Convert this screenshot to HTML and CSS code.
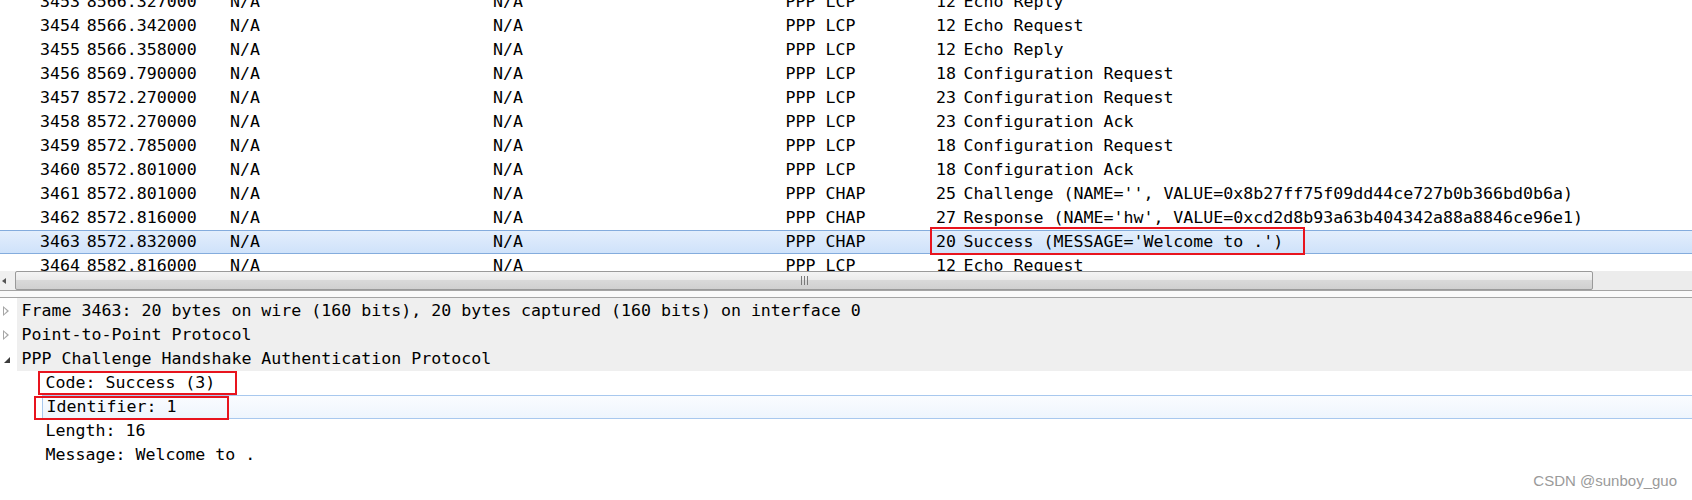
FILE: index.html
```html
<!DOCTYPE html>
<html>
<head>
<meta charset="utf-8">
<link rel="stylesheet" href="styles.css">
</head>
<body>
<div class="app">
  <div class="plist">
    <div class="rows">
      <div class="row"><span class="no">3453</span><span class="tm">8566.327000</span><span>N/A</span><span>N/A</span><span>PPP LCP</span><span class="len">12</span><span class="info">Echo Reply</span></div>
      <div class="row"><span class="no">3454</span><span class="tm">8566.342000</span><span>N/A</span><span>N/A</span><span>PPP LCP</span><span class="len">12</span><span class="info">Echo Request</span></div>
      <div class="row"><span class="no">3455</span><span class="tm">8566.358000</span><span>N/A</span><span>N/A</span><span>PPP LCP</span><span class="len">12</span><span class="info">Echo Reply</span></div>
      <div class="row"><span class="no">3456</span><span class="tm">8569.790000</span><span>N/A</span><span>N/A</span><span>PPP LCP</span><span class="len">18</span><span class="info">Configuration Request</span></div>
      <div class="row"><span class="no">3457</span><span class="tm">8572.270000</span><span>N/A</span><span>N/A</span><span>PPP LCP</span><span class="len">23</span><span class="info">Configuration Request</span></div>
      <div class="row"><span class="no">3458</span><span class="tm">8572.270000</span><span>N/A</span><span>N/A</span><span>PPP LCP</span><span class="len">23</span><span class="info">Configuration Ack</span></div>
      <div class="row"><span class="no">3459</span><span class="tm">8572.785000</span><span>N/A</span><span>N/A</span><span>PPP LCP</span><span class="len">18</span><span class="info">Configuration Request</span></div>
      <div class="row"><span class="no">3460</span><span class="tm">8572.801000</span><span>N/A</span><span>N/A</span><span>PPP LCP</span><span class="len">18</span><span class="info">Configuration Ack</span></div>
      <div class="row"><span class="no">3461</span><span class="tm">8572.801000</span><span>N/A</span><span>N/A</span><span>PPP CHAP</span><span class="len">25</span><span class="info">Challenge (NAME='', VALUE=0x8b27ff75f09dd44ce727b0b366bd0b6a)</span></div>
      <div class="row"><span class="no">3462</span><span class="tm">8572.816000</span><span>N/A</span><span>N/A</span><span>PPP CHAP</span><span class="len">27</span><span class="info">Response (NAME='hw', VALUE=0xcd2d8b93a63b404342a88a8846ce96e1)</span></div>
      <div class="row selected"><span class="no">3463</span><span class="tm">8572.832000</span><span>N/A</span><span>N/A</span><span>PPP CHAP</span><span class="len">20</span><span class="info">Success (MESSAGE='Welcome to .')</span></div>
      <div class="row"><span class="no">3464</span><span class="tm">8582.816000</span><span>N/A</span><span>N/A</span><span>PPP LCP</span><span class="len">12</span><span class="info">Echo Request</span></div>
    </div>
  </div>
  <div class="hscroll">
    <div class="arrow-btn"><span class="arrow-left"></span></div>
    <div class="thumb"><span class="grip"><i></i><i></i><i></i></span></div>
    <div class="track"></div>
  </div>
  <div class="splitter"></div>
  <div class="tree">
    <div class="group">
      <div class="node top"><span class="exp"><span class="tri-closed"></span></span><span class="lbl">Frame 3463: 20 bytes on wire (160 bits), 20 bytes captured (160 bits) on interface 0</span></div>
      <div class="node top"><span class="exp"><span class="tri-closed"></span></span><span class="lbl">Point-to-Point Protocol</span></div>
      <div class="node top"><span class="exp"><span class="tri-open"></span></span><span class="lbl">PPP Challenge Handshake Authentication Protocol</span></div>
    </div>
    <div class="node child">Code: Success (3)</div>
    <div class="node child focus">Identifier: 1</div>
    <div class="node child">Length: 16</div>
    <div class="node child">Message: Welcome to .</div>
  </div>
  <div class="mark mark-info"></div>
  <div class="mark mark-code"></div>
  <div class="mark mark-ident"></div>
  <div class="watermark">CSDN @sunboy_guo</div>
</div>
</body>
</html>
```

FILE: styles.css
```css
html, body {
  margin: 0;
  padding: 0;
  background: #ffffff;
}
body {
  width: 1692px;
  height: 500px;
  overflow: hidden;
}
.app {
  position: relative;
  width: 1692px;
  height: 500px;
  font-family: "DejaVu Sans Mono", "Liberation Mono", monospace;
  font-size: 16.6px;
  color: #000;
}
.plist {
  height: 271px;
  overflow: hidden;
  background: #fff;
}
.rows {
  margin-top: -10px;
}
.row {
  display: grid;
  grid-template-columns: 80px 150px 263px 292.6px 120px 50.4px 1fr;
  height: 24px;
  line-height: 24px;
  white-space: nowrap;
  box-sizing: border-box;
}
.row .no { text-align: right; }
.row .tm { padding-left: 6.8px; }
.row .len { text-align: right; }
.row .info { padding-left: 7.6px; }
.row.selected {
  border-top: 1px solid #84acdd;
  border-bottom: 1px solid #84acdd;
  line-height: 22px;
  background: linear-gradient(#e3eefc, #cfe2fa);
}
.hscroll {
  display: grid;
  grid-template-columns: 15px 1578px 1fr;
  height: 19px;
  background: #ebebeb;
}
.arrow-btn {
  display: flex;
  align-items: center;
  padding-left: 2px;
  background: #f0f0f0;
}
.arrow-left {
  width: 0;
  height: 0;
  border-top: 3px solid transparent;
  border-bottom: 3px solid transparent;
  border-right: 4px solid #555;
}
.thumb {
  box-sizing: border-box;
  border: 1px solid #9a9a9a;
  border-radius: 2px;
  background: linear-gradient(#f4f4f4 0%, #ebebeb 45%, #d9d9d9 50%, #d0d0d0 100%);
  display: flex;
  align-items: center;
  justify-content: center;
}
.grip {
  display: flex;
  gap: 2px;
  height: 9px;
}
.grip i {
  display: block;
  width: 1px;
  height: 9px;
  background: #7a7a7a;
}
.track {
  background: #ececec;
}
.splitter {
  height: 8px;
  box-sizing: border-box;
  border-top: 1px solid #a4a4a4;
  border-bottom: 1px solid #a4a4a4;
  background: #fafafa;
}
.tree {
  white-space: nowrap;
}
.group {
  padding-top: 1px;
  background: linear-gradient(90deg, #fff 0 17px, #efefef 17px);
}
.node {
  height: 24px;
  line-height: 24px;
  box-sizing: border-box;
}
.node.top {
  display: flex;
}
.exp {
  width: 21.6px;
  flex: none;
  display: flex;
  align-items: center;
  padding-left: 3px;
  box-sizing: border-box;
}
.tri-closed {
  position: relative;
  width: 0;
  height: 0;
  border-top: 5px solid transparent;
  border-bottom: 5px solid transparent;
  border-left: 6px solid #a6a6a6;
}
.tri-closed::after {
  content: "";
  position: absolute;
  left: -5px;
  top: -3px;
  width: 0;
  height: 0;
  border-top: 3px solid transparent;
  border-bottom: 3px solid transparent;
  border-left: 3.6px solid #fff;
}
.tri-open {
  width: 0;
  height: 0;
  margin-top: 2px;
  margin-left: 1px;
  border-left: 6px solid transparent;
  border-bottom: 6px solid #3c3c3c;
}
.node.child {
  padding-left: 45.5px;
}
.node.focus {
  margin-left: 42px;
  padding-left: 3.5px;
  border: 1px solid #a8c8ee;
  border-right: none;
  line-height: 22px;
  background: linear-gradient(#fafcff, #eef5fd);
}
.mark {
  position: absolute;
  box-sizing: border-box;
  border: 2px solid #e8141e;
}
.mark-info {
  left: 930px;
  top: 227px;
  width: 375px;
  height: 28px;
}
.mark-code {
  left: 38px;
  top: 371px;
  width: 199px;
  height: 24px;
}
.mark-ident {
  left: 34px;
  top: 396px;
  width: 195px;
  height: 24px;
}
.watermark {
  position: absolute;
  right: 15px;
  top: 471px;
  line-height: 20px;
  font-family: "Liberation Sans", Arial, sans-serif;
  font-size: 15px;
  color: #9a9a9a;
}
```
